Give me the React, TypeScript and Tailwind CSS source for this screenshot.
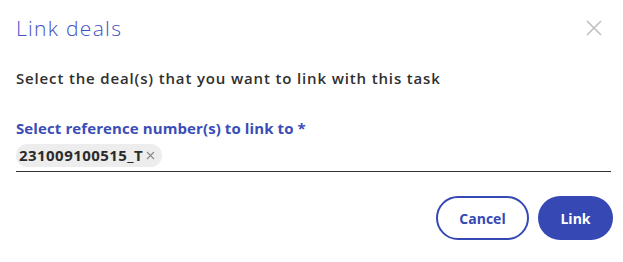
import React from 'react';

export default function App() {
  return (
    <div className="w-[623px] h-[262px] bg-white font-['Open_Sans',sans-serif] pl-4 pr-[12px] pt-[14px] text-[#333]">
      {/* Header */}
      <div className="flex items-center justify-between">
        <h2 className="text-[21px] font-light tracking-[1.3px] text-[#3f51c0] leading-[28px]">Link deals</h2>
        <button className="mr-[9px] text-[#bdbdbd]" aria-label="Close">
          <svg width="16" height="16" viewBox="0 0 16 16" fill="none" stroke="currentColor" strokeWidth="1.5">
            <path d="M1 1L15 15M15 1L1 15" />
          </svg>
        </button>
      </div>

      <p className="mt-[26px] text-[15px] font-semibold tracking-[0.85px] text-[#2f2f2f] leading-[20px]">
        Select the deal(s) that you want to link with this task
      </p>

      {/* Field */}
      <div className="mt-[30px]">
        <label className="block text-[15px] font-bold tracking-[0.1px] text-[#3a4db6] leading-[20px]">
          Select reference number(s) to link to *
        </label>
        <div className="mt-[6px] flex items-center pb-[4px] border-b border-[#333]">
          <span className="flex items-center gap-[3px] h-[23px] pl-[3px] pr-[7px] rounded-full bg-[#ededed] text-[15px] font-bold tracking-[0.45px] text-[#2b2b2b]">
            231009100515_T
            <svg width="9" height="9" viewBox="0 0 9 9" fill="none" stroke="#888" strokeWidth="1.1">
              <path d="M1 1L8 8M8 1L1 8" />
            </svg>
          </span>
        </div>
      </div>

      {/* Actions */}
      <div className="mt-[24px] flex justify-end gap-[9px] mr-[-2px]">
        <button className="w-[93px] h-[44px] rounded-full border-2 border-[#3548b4] text-[#3548b4] text-[14px] font-bold">
          Cancel
        </button>
        <button className="w-[75px] h-[44px] rounded-full bg-[#3548b4] text-white text-[14px] font-bold">
          Link
        </button>
      </div>
    </div>
  );
}
